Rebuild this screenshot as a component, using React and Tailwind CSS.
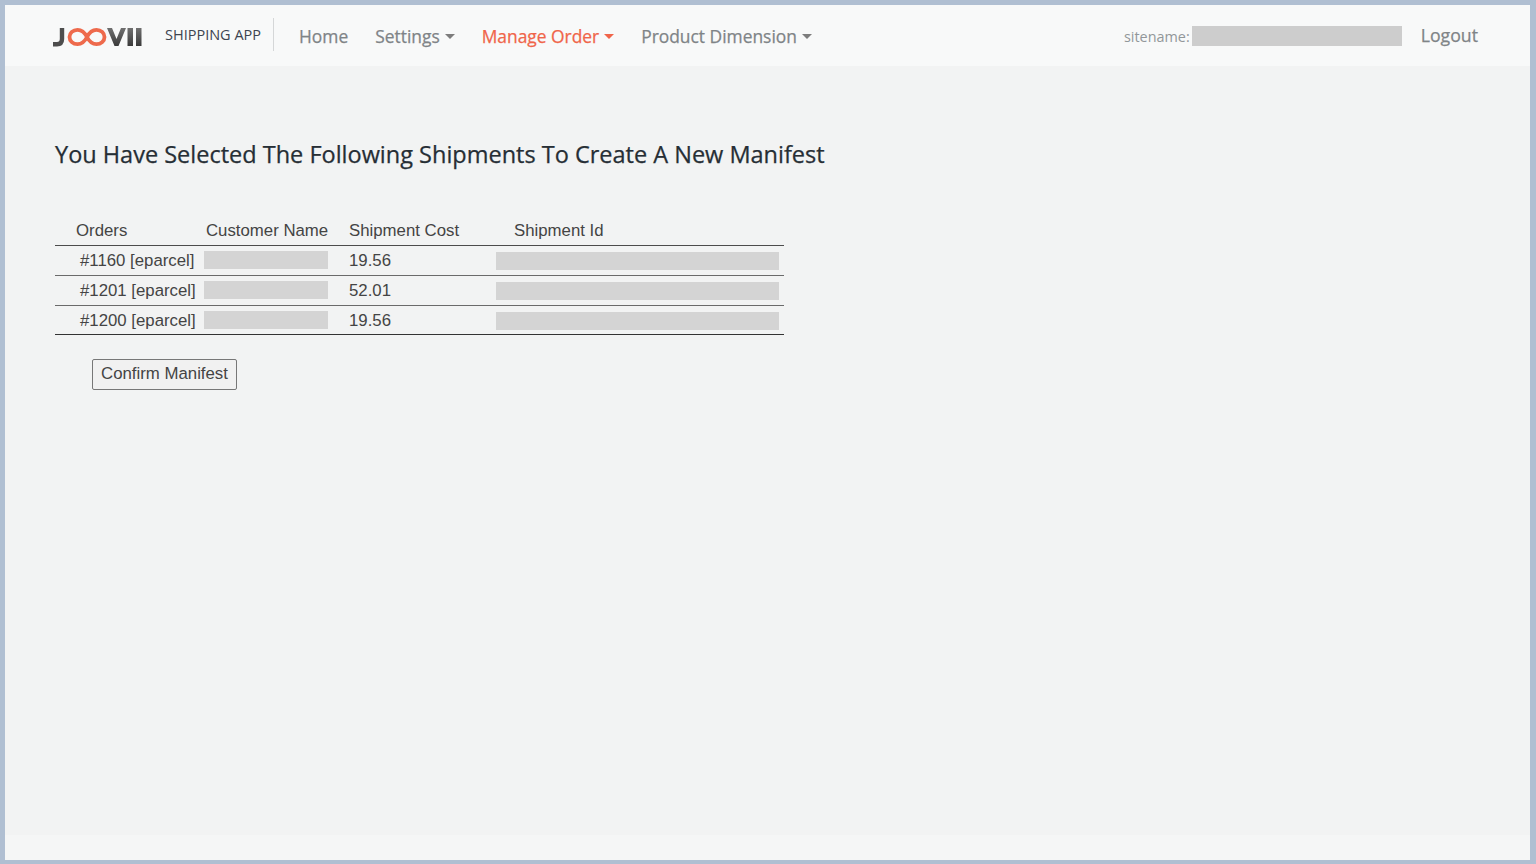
import React from "react";

function Logo() {
  return (
    <svg width="90" height="22" viewBox="0 0 90 22" className="block relative top-[1px]" aria-label="JOOVII logo">
      <defs>
        <linearGradient id="grey" x1="0" y1="0" x2="0" y2="1">
          <stop offset="0" stopColor="#707070" />
          <stop offset="1" stopColor="#3a3a3a" />
        </linearGradient>
      </defs>
      <path d="M10 2V13C10 17 8 18.2 5 18.2H1" fill="none" stroke="#4d4d4d" strokeWidth="4.4" />
      <path d="M35 11C32.5 6 29 3.8 25.5 3.8C21 3.8 17.5 7 17.5 11C17.5 15 21 18.2 25.5 18.2C29 18.2 32.5 16 35 11C37.5 6 41 3.8 44.5 3.8C49 3.8 52.5 7 52.5 11C52.5 15 49 18.2 44.5 18.2C41 18.2 37.5 16 35 11Z" fill="none" stroke="#ee6a4c" strokeWidth="3.8" />
      <path d="M55 2H60L64.5 13L69 2H74L66.5 20H62.5Z" fill="url(#grey)" />
      <rect x="75.5" y="2" width="5.5" height="18" fill="url(#grey)" />
      <rect x="84" y="2" width="5.5" height="18" fill="url(#grey)" />
    </svg>
  );
}

function Caret({ color = "border-t-[#7d7d7d]" }) {
  return (
    <span className={`inline-block w-0 h-0 ml-[5px] border-x-[5px] border-x-transparent border-t-[5px] ${color} relative top-[-4px]`} />
  );
}

function Redact({ className }) {
  return <div className={`bg-[#d4d4d4] h-[18px] ${className}`} />;
}

const rows = [
  { order: "#1160 [eparcel]", cost: "19.56", h: "h-[30px]", border: "border-[#6a6a6a]", idTop: "mt-[1px]" },
  { order: "#1201 [eparcel]", cost: "52.01", h: "h-[30px]", border: "border-[#6a6a6a]", idTop: "mt-[2px]" },
  { order: "#1200 [eparcel]", cost: "19.56", h: "h-[29px]", border: "border-[#333333]", idTop: "mt-[3px]" },
];

export default function App() {
  return (
    <div className="h-[864px] w-full bg-[#b0bfd2] pt-[5px] pl-[5px] pr-[6px] pb-[4px] overflow-hidden font-['Open_Sans',sans-serif]">
      <div className="h-full bg-[#f2f3f3] flex flex-col">
        <nav className="h-[61px] shrink-0 bg-[#f8f9f9] flex items-center pl-[47px] pr-[52px]">
          <Logo />
          <span className="ml-[23px] text-[14.5px] text-[#3d4450] relative top-[-1px]">SHIPPING APP</span>
          <div className="ml-[12px] w-px h-[33px] bg-[#d5d7d8] relative top-[-1px]" />
          <div className="flex items-center text-[17.4px] [-webkit-text-stroke:0.25px] font-medium text-[#7f8487] ml-[25px] leading-none relative top-[1px]">
            <span>Home</span>
            <span className="ml-[27px]">Settings<Caret /></span>
            <span className="ml-[27px] text-[#f0654a]">Manage Order<Caret color="border-t-[#f0654a]" /></span>
            <span className="ml-[27px]">Product Dimension<Caret /></span>
          </div>
          <div className="ml-auto flex items-center relative top-[1px]">
            <span className="text-[14.4px] text-[#92979a]">sitename:</span>
            <div className="ml-[2px] w-[210px] h-[20px] bg-[#cdcdcd]" />
            <span className="ml-[19px] text-[17.7px] [-webkit-text-stroke:0.25px] font-medium text-[#7f8487] relative top-[-1px]">Logout</span>
          </div>
        </nav>
        <main className="pt-[70px] grow flex flex-col">
          <h1 className="ml-[50px] text-[23.5px] leading-[36px] font-medium text-[#262e35] m-0 [-webkit-text-stroke:0.25px]">You Have Selected The Following Shipments To Create A New Manifest</h1>
          <table className="ml-[50px] mt-[42px] w-[729px] table-fixed border-collapse font-['Liberation_Sans',sans-serif] text-[16.8px] text-[#444444]">
            <colgroup>
              <col className="w-[145px]" />
              <col className="w-[146px]" />
              <col className="w-[146px]" />
              <col className="w-[292px]" />
            </colgroup>
            <thead>
              <tr className="h-[31px] border-b border-[#4c4c4c]">
                <th className="font-normal text-left pl-[21px] pt-[3px] pb-0">Orders</th>
                <th className="font-normal text-left pl-[6px] pt-[3px] pb-0 whitespace-nowrap">Customer Name</th>
                <th className="font-normal text-left pl-[3px] pt-[3px] pb-0 whitespace-nowrap">Shipment Cost</th>
                <th className="font-normal text-left pl-[22px] pt-[3px] pb-0">Shipment Id</th>
              </tr>
            </thead>
            <tbody>
              {rows.map((r) => (
                <tr key={r.order} className={`${r.h} border-b ${r.border}`}>
                  <td className="pl-[25px] pt-[2px] pb-0 whitespace-nowrap">{r.order}</td>
                  <td className="pl-[4px] py-0"><Redact className="w-[124px]" /></td>
                  <td className="pl-[3px] pt-[2px] pb-0">{r.cost}</td>
                  <td className="pl-[4px] py-0"><Redact className={`w-[283px] ${r.idTop}`} /></td>
                </tr>
              ))}
            </tbody>
          </table>
          <button className="mt-[24px] ml-[87px] w-[145px] h-[31px] self-start border border-[#777777] rounded-[2px] bg-[#f1f1f1] text-[16.8px] text-[#444444] font-['Liberation_Sans',sans-serif]">Confirm Manifest</button>
          <div className="mt-auto h-[25px] bg-[#f5f6f6]" />
        </main>
      </div>
    </div>
  );
}
